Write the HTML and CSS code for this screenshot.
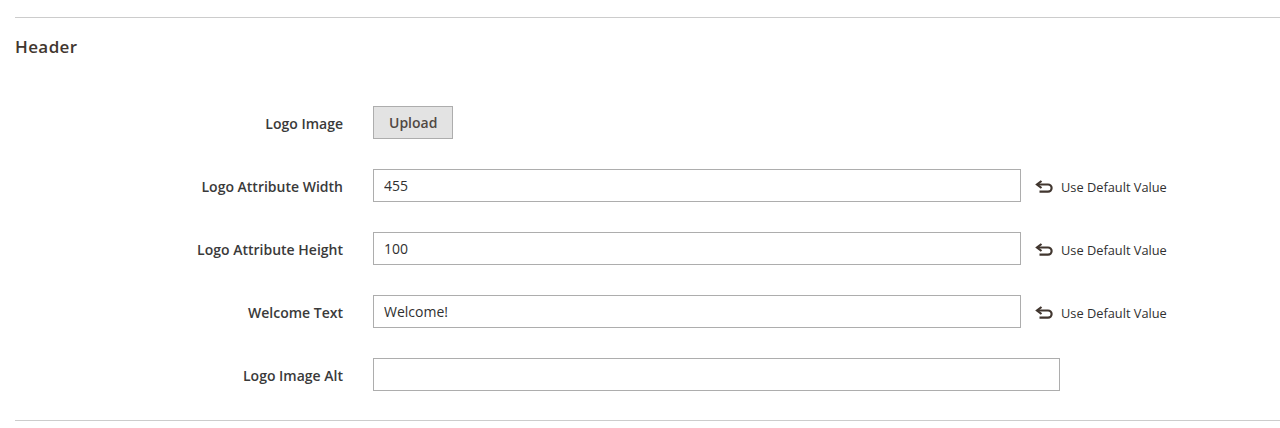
FILE: index.html
```html
<!DOCTYPE html>
<html lang="en">
<head>
  <meta charset="UTF-8">
  <title>Header</title>
  <link rel="stylesheet" href="styles.css">
</head>
<body>
  <div class="section">
    <div class="section-title">Header</div>

    <div class="fields">
      <div class="field">
        <label class="field-label">Logo Image</label>
        <div class="field-control">
          <button class="upload-btn" type="button">Upload</button>
        </div>
      </div>

      <div class="field">
        <label class="field-label" for="logo-width">Logo Attribute Width</label>
        <div class="field-control">
          <input class="text-input" type="text" id="logo-width" value="455">
        </div>
        <div class="use-default">
          <svg class="undo-icon" width="19" height="14" viewBox="0 0 19 14">
            <path d="M6.5 1 L2 4.5 L6.5 8" fill="none" stroke="#41362f" stroke-width="2.2"/>
            <path d="M2.5 4.5 H13 A3.6 3.6 0 0 1 13 11.7 H4.5" fill="none" stroke="#41362f" stroke-width="2.2"/>
          </svg>
          <span>Use Default Value</span>
        </div>
      </div>

      <div class="field">
        <label class="field-label" for="logo-height">Logo Attribute Height</label>
        <div class="field-control">
          <input class="text-input" type="text" id="logo-height" value="100">
        </div>
        <div class="use-default">
          <svg class="undo-icon" width="19" height="14" viewBox="0 0 19 14">
            <path d="M6.5 1 L2 4.5 L6.5 8" fill="none" stroke="#41362f" stroke-width="2.2"/>
            <path d="M2.5 4.5 H13 A3.6 3.6 0 0 1 13 11.7 H4.5" fill="none" stroke="#41362f" stroke-width="2.2"/>
          </svg>
          <span>Use Default Value</span>
        </div>
      </div>

      <div class="field">
        <label class="field-label" for="welcome">Welcome Text</label>
        <div class="field-control">
          <input class="text-input" type="text" id="welcome" value="Welcome!">
        </div>
        <div class="use-default">
          <svg class="undo-icon" width="19" height="14" viewBox="0 0 19 14">
            <path d="M6.5 1 L2 4.5 L6.5 8" fill="none" stroke="#41362f" stroke-width="2.2"/>
            <path d="M2.5 4.5 H13 A3.6 3.6 0 0 1 13 11.7 H4.5" fill="none" stroke="#41362f" stroke-width="2.2"/>
          </svg>
          <span>Use Default Value</span>
        </div>
      </div>

      <div class="field">
        <label class="field-label" for="logo-alt">Logo Image Alt</label>
        <div class="field-control">
          <input class="text-input wide" type="text" id="logo-alt" value="">
        </div>
      </div>
    </div>
  </div>
</body>
</html>
```

FILE: styles.css
```css
body {
  margin: 0;
  padding-top: 17px;
  font-family: "Open Sans", Arial, sans-serif;
  color: #303030;
  background: #fff;
}
.section {
  margin-left: 15px;
  border-top: 1px solid #cccccc;
  border-bottom: 1px solid #cccccc;
}
.section-title {
  padding-top: 17px;
  font-size: 17px;
  line-height: 24px;
  font-weight: 600;
  letter-spacing: 0.4px;
  color: #41362f;
}
.fields {
  margin-top: 47px;
  padding-bottom: 29px;
}
.field {
  display: grid;
  grid-template-columns: 328px 648px auto;
  column-gap: 30px;
  align-items: center;
  margin-bottom: 30px;
}
.field:last-child {
  margin-bottom: 0;
  grid-template-columns: 328px 687px;
}
.field-label {
  text-align: right;
  font-size: 14px;
  line-height: 20px;
  padding-top: 2px;
  font-weight: 600;
  color: #3a3a3a;
}
.field-control {
  display: flex;
}
.text-input {
  width: 100%;
  height: 33px;
  box-sizing: border-box;
  border: 1px solid #adadad;
  padding: 0 10px;
  font-family: "Open Sans", Arial, sans-serif;
  font-size: 14px;
  color: #303030;
  border-radius: 0;
  outline: none;
}
.upload-btn {
  height: 33px;
  box-sizing: border-box;
  padding: 0 15px;
  background: #e3e3e3;
  border: 1px solid #adadad;
  font-family: "Open Sans", Arial, sans-serif;
  font-size: 14px;
  font-weight: 600;
  color: #514943;
  border-radius: 0;
}
.use-default {
  display: flex;
  align-items: center;
  gap: 7px;
  margin-left: -16px;
  padding-top: 2px;
  font-size: 12.8px;
  color: #303030;
}
.undo-icon {
  display: block;
}
```
